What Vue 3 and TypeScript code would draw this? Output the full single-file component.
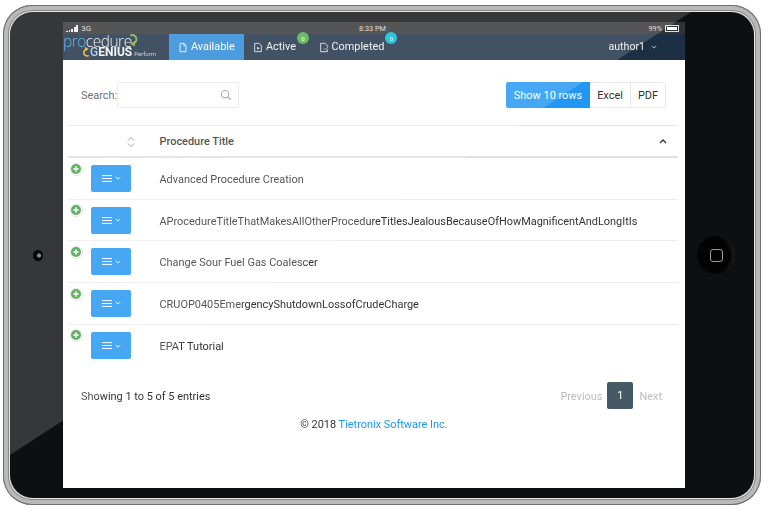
<script setup lang="ts">
const rows: string[] = [
  'Advanced Procedure Creation',
  'AProcedureTitleThatMakesAllOtherProcedureTitlesJealousBecauseOfHowMagnificentAndLongItIs',
  'Change Sour Fuel Gas Coalescer',
  'CRUOP0405EmergencyShutdownLossofCrudeCharge',
  'EPAT Tutorial',
]
</script>

<template>
  <div class="device">
    <div class="bezel">
      <div class="side side-left"><span class="camera"></span></div>
      <div class="screen">
        <div class="status">
          <div class="status-left">
            <span class="bars"><i></i><i></i><i></i><i></i><i></i></span>
            <span>3G</span>
          </div>
          <span class="time">8:33 PM</span>
          <div class="status-right">
            <span>99%</span>
            <span class="battery"><b></b></span>
          </div>
        </div>
        <nav class="nav">
          <div class="logo">
            <span class="logo-top"><span class="pro">pro</span><span class="cedure">cedure</span></span>
            <span class="logo-bottom"><span class="g">G</span><span class="enius">ENIUS</span><span class="perform">Perform</span></span>
            <svg class="arrow arrow-green" viewBox="0 0 12 14"><path d="M3 1.500c4-1.500 7.500 1.500 6.500 5.500-.5 2-2 3-3.500 3.500" fill="none" stroke="#7cb342" stroke-width="2"/><path d="M8 13.500 3 10.500 8 7.500z" fill="#7cb342"/></svg>
            <svg class="arrow arrow-yellow" viewBox="0 0 12 14"><path d="M9 12.500C5 14 1.500 11 2.500 7 3 5 4.500 4 6 3.500" fill="none" stroke="#f2b418" stroke-width="2"/><path d="M4 .5 9 3.500 4 6.500z" fill="#f2b418"/></svg>
          </div>
          <a class="tab tab-on">
            <svg class="tab-icon" viewBox="0 0 12 12"><path d="M2.500 1h4.500l2.500 2.500V11h-7zM7 1v2.500h2.500" fill="none" stroke="currentColor"/></svg>
            <span class="tab-text">Available</span>
          </a>
          <a class="tab tab-active">
            <svg class="tab-icon" viewBox="0 0 12 12"><path d="M2 1h5l3 2.500V11H2z" fill="none" stroke="currentColor"/><path d="M5 5l3 1.800L5 8.600z" fill="currentColor"/></svg>
            <span class="tab-text">Active</span>
            <span class="badge badge-green">0</span>
          </a>
          <a class="tab tab-done">
            <svg class="tab-icon" viewBox="0 0 12 12"><path d="M10 8v3H2V1h5l3 2.500V5" fill="none" stroke="currentColor"/><path d="M6 7l1.500 1.500L11 5" fill="none" stroke="currentColor" stroke-width=".8"/></svg>
            <span class="tab-text">Completed</span>
            <span class="badge badge-cyan">0</span>
          </a>
          <div class="user">
            <span class="tab-text">author1</span>
            <svg class="chev-small" viewBox="0 0 8 5"><path d="M1 1l3 3 3-3" fill="none" stroke="currentColor"/></svg>
          </div>
        </nav>
        <main class="content">
          <div class="tools">
            <label class="search">
              <span>Search:</span>
              <span class="input">
                <svg viewBox="0 0 14 14"><circle cx="6" cy="6" r="4.300" fill="none" stroke="#9e9e9e" stroke-width="1.300"/><path d="M9.200 9.200l3.300 3.300" stroke="#9e9e9e" stroke-width="1.500"/></svg>
              </span>
            </label>
            <div class="btns">
              <button class="btn btn-primary">Show 10 rows</button>
              <button class="btn btn-excel">Excel</button>
              <button class="btn btn-pdf">PDF</button>
            </div>
          </div>

          <div class="table">
            <div class="head">
              <div class="cell-ctl">
                <svg class="sort" viewBox="0 0 8 12"><path d="M1 4.500l3-3 3 3M1 7.500l3 3 3-3" fill="none" stroke="#8f8f8f" stroke-width="1"/></svg>
              </div>
              <div class="head-title">Procedure Title</div>
              <svg class="sort-up" viewBox="0 0 8 5"><path d="M1 4l3-3 3 3" fill="none" stroke="#333" stroke-width="1.300"/></svg>
            </div>
            <div v-for="r in rows" :key="r" class="row">
              <span class="plus">
                <svg viewBox="0 0 10 10"><circle cx="5" cy="5" r="5" fill="#43a047"/><path d="M5 2.300v5.400M2.300 5h5.400" stroke="#fff" stroke-width="1.400"/></svg>
              </span>
              <div class="cell-ctl">
                <button class="menu">
                  <svg class="burger" viewBox="0 0 10 7"><path d="M0 .6h10M0 3.500h10M0 6.400h10" stroke="#fff" stroke-width="1"/></svg>
                  <svg class="chev-btn" viewBox="0 0 8 5"><path d="M1 1l3 3 3-3" fill="none" stroke="#fff" stroke-width="1.200"/></svg>
                </button>
              </div>
              <div class="title">{{ r }}</div>
            </div>
          </div>

          <div class="foot">
            <span class="foot-text">Showing 1 to 5 of 5 entries</span>
            <div class="pager">
              <span class="pg-link">Previous</span>
              <span class="pg-num">1</span>
              <span class="pg-link">Next</span>
            </div>
          </div>
          <div class="copy">© 2018 <a>Tietronix Software Inc.</a></div>
        </main>
      </div>
      <div class="side side-right"><span class="home"><i></i></span></div>
      <div class="glare"></div>
    </div>
  </div>
</template>

<style>
html, body { background: #fff; margin: 0; }
</style>

<style scoped>
.device {
  box-sizing: border-box;
  width: 758px;
  height: 500px;
  margin: 5px 3px 0;
  padding: 7px;
  border-radius: 29px;
  background: #b4b4b4;
  box-shadow: inset 0 0 0 1px #6f6f6f, inset 0 0 0 5px #b9b9b9, inset 0 0 0 6px #8a8a8a, inset 0 0 0 7px #e6e6e6;
  font-family: Roboto, "Liberation Sans", sans-serif;
  color: #333;
  filter: blur(.3px);
}
.bezel {
  position: relative;
  display: flex;
  height: 486px;
  border-radius: 23px;
  overflow: hidden;
  background: #0d0f10;
}
.side { display: flex; align-items: center; justify-content: center; }
.side-left { width: 53px; }
.side-right { width: 69px; padding-right: 7px; box-sizing: border-box; }
.camera {
  position: relative; z-index: 2; margin-left: 2px;
  width: 10px; height: 11px; border-radius: 50%;
  background: radial-gradient(circle at 60% 50%, #8a8a8a 0 1.500px, #111 2.500px, #000 5px, #222 100%);
}
.home {
  width: 38px; height: 38px; border-radius: 50%;
  display: flex; align-items: center; justify-content: center;
  background: radial-gradient(circle at 35% 50%, #030303 62%, #474848 105%);
}
.home i {
  box-sizing: border-box; width: 13px; height: 13px;
  border: 1px solid #9c9c9c; border-radius: 3px;
}
.screen {
  width: 622px; margin: 10px 0;
  display: flex; flex-direction: column;
  background: #fff;
}
.status {
  height: 12px; flex: none;
  display: grid; grid-template-columns: 1fr auto 1fr;
  align-items: center;
  padding: 0 6px 0 3px;
  background: #333;
  color: #dcdcdc;
  font-size: 7.300px;
}
.status-left { display: flex; align-items: center; gap: 3px; font-size: 8px; }
.bars { display: flex; align-items: flex-end; gap: .8px; height: 7px; }
.bars i { width: 1.800px; background: #eee; }
.bars i:nth-child(1) { height: 1px; }
.bars i:nth-child(2) { height: 2px; }
.bars i:nth-child(3) { height: 3px; }
.bars i:nth-child(4) { height: 5px; }
.bars i:nth-child(5) { height: 7px; }
.status-right { display: flex; justify-content: flex-end; align-items: center; gap: 3px; }
.battery { box-sizing: border-box; width: 14px; height: 7px; border: 1px solid #ddd; padding: 1px; display: flex; }
.battery b { flex: 1; background: #fff; }
.nav {
  height: 26px; flex: none;
  display: flex; align-items: stretch;
  background: #1c2f45;
  color: #f0f0f0;
  font-size: 10.900px;
}
.tab-text { position: relative; top: -1px; }
.logo { position: relative; width: 106px; flex: none; display: flex; flex-direction: column; }
.logo-top { height: 12px; line-height: 14px; font-size: 15.500px; letter-spacing: -.5px; font-family: "Open Sans", sans-serif; font-weight: 300; white-space: nowrap; }
.pro { color: #45a5e8; }
.cedure { color: #e8e8e8; }
.logo-bottom { height: 12px; line-height: 12px; padding-left: 27px; white-space: nowrap; font-family: Roboto, sans-serif; }
.g { color: #9ccbea; font-size: 12px; font-weight: 500; }
.enius { color: #f3f3f3; font-weight: 700; font-size: 12px; }
.perform { color: #ccc; font-size: 6px; margin-left: 2px; }
.arrow { position: absolute; }
.arrow-green { width: 12px; height: 13px; left: 64px; top: 0; }
.arrow-yellow { width: 9px; height: 13px; left: 19px; top: 11px; }
.tab { position: relative; display: flex; align-items: center; gap: 3px; white-space: nowrap; }
.tab-icon { width: 10px; height: 11px; flex: none; }
.tab-on { background: #2a88d6; width: 75px; box-sizing: border-box; padding-left: 9px; color: #fff; }
.tab-active { margin-left: 9px; }
.tab-done { margin-left: 22.500px; }
.badge {
  position: absolute; top: -2px; right: -13px;
  width: 12px; height: 12px; border-radius: 50%;
  display: flex; align-items: center; justify-content: center;
  color: #fff; font-size: 6px;
}
.badge-green { background: #4caf50; }
.badge-cyan { background: #00bcd4; }
.user { margin-left: auto; margin-right: 28px; display: flex; align-items: center; gap: 6px; font-size: 10.600px; }
.chev-small { width: 6px; height: 4px; }
.content { flex: 1; display: flex; flex-direction: column; font-size: 10.930px; }
.tools { display: flex; justify-content: space-between; padding: 22px 19px 0 18px; height: 43px; }
.search { display: flex; align-items: center; height: 26px; color: #555; }
.input {
  box-sizing: border-box; width: 122px; height: 26px;
  border: 1px solid #e8e8e8; border-radius: 2px;
  display: flex; align-items: center; justify-content: flex-end; padding-right: 6px;
}
.input svg { width: 12px; height: 12px; }
.btns { display: flex; height: 26px; }
.btn {
  box-sizing: border-box; height: 26px; padding: 0;
  font: inherit; color: #333;
  background: #fff; border: 1px solid #e8e8e8; border-left: 0;
}
.btn-primary { width: 84px; background: #2196f3; border: 0; border-radius: 2px 0 0 2px; color: #fff; }
.btn-excel { width: 41px; }
.btn-pdf { width: 35px; border-radius: 0 2px 2px 0; }
.table { margin-left: 5px; width: 610px; }
.head {
  box-sizing: border-box; height: 33px;
  display: flex; align-items: center;
  border-top: 1px solid #e6e6e6; border-bottom: 2px solid #e0e0e0;
}
.cell-ctl { flex: none; display: flex; justify-content: flex-end; padding-right: 24px; width: 63px; }
.sort { width: 8px; height: 12px; position: relative; top: 1px; margin-right: -4px; }
.head-title { margin-left: 4.500px; font-weight: 500; flex: 1; color: #333; }
.sort-up { width: 8px; height: 5px; margin-right: 11px; }
.row {
  position: relative; box-sizing: border-box; height: 41.700px;
  display: flex; align-items: center;
  border-bottom: 1px solid #ececec;
}
.row:last-child { border-bottom: 0; }
.plus {
  position: absolute; left: 2px; top: 4.500px;
  width: 13px; height: 13px; box-sizing: border-box;
  border: 1.500px solid #dcdcdc; border-radius: 50%;
  display: flex; background: #fff;
}
.plus svg { width: 10px; height: 10px; }
.menu {
  width: 40px; height: 27px; padding: 0; border: 0; border-radius: 2px;
  background: #2196f3; display: flex; align-items: center; justify-content: center; gap: 3px;
}
.burger { width: 10px; height: 7px; }
.chev-btn { width: 6px; height: 4px; }
.title { margin-left: 4.500px; padding-top: 2px; white-space: nowrap; }
.foot { display: flex; justify-content: space-between; align-items: center; padding: 15px 23px 0 18px; height: 28px; }
.foot-text, .pg-link { padding-top: 2px; }
.pager { display: flex; align-items: center; }
.pg-link { color: #bdbdbd; }
.pg-num {
  width: 26px; height: 27px; margin: 0 6px 0 5px; border-radius: 2px;
  background: #455a64; color: #fff;
  display: flex; align-items: center; justify-content: center;
}
.copy { margin-top: 9px; text-align: center; }
.copy a { color: #2196f3; }
.glare {
  position: absolute; inset: 0;
  background: rgba(255, 255, 255, .17);
  clip-path: polygon(0 0, 681px 0, 0 443px);
  pointer-events: none;
}
</style>
